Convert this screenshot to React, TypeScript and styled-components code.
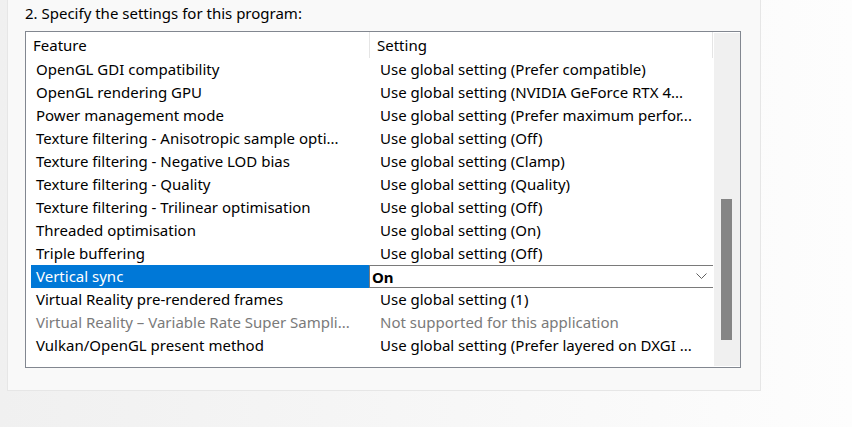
import styled, { createGlobalStyle } from 'styled-components';

const GlobalStyle = createGlobalStyle`
    html, body {
        margin: 0;
        padding: 0;
    }
    body {
        font-family: 'Noto Sans', 'Open Sans', sans-serif;
        font-size: 15px;
        color: #000;
    }
`;

const Page = styled.div`
    width: 852px;
    height: 427px;
    overflow: hidden;
    background: linear-gradient(to right, #f0f0f0, #fdfdfd);
`;

const Panel = styled.div`
    box-sizing: border-box;
    margin-left: 7px;
    width: 754px;
    height: 391px;
    background: #f9f9f9;
    border: 1px solid #e6e6e6;
    border-top: none;
    padding: 0 0 0 17px;
`;

const Title = styled.div`
    height: 31px;
    line-height: 27px;
    white-space: nowrap;
`;

const Table = styled.div`
    box-sizing: border-box;
    display: flex;
    width: 716px;
    height: 337px;
    border: 1px solid #828790;
    background: #fff;
`;

const List = styled.div`
    flex: 1;
    display: flex;
    flex-direction: column;
`;

const HeaderRow = styled.div`
    display: flex;
    height: 26px;
`;

const HeaderCell = styled.div<{ $width: number }>`
    box-sizing: border-box;
    width: ${(p) => p.$width}px;
    padding-left: 7px;
    line-height: 27px;
    border-right: 1px solid #e5e5e5;
`;

const Row = styled.div`
    display: flex;
    height: 23px;
    padding-left: 5px;
`;

const FeatureCell = styled.div<{ $selected?: boolean; $disabled?: boolean }>`
    box-sizing: border-box;
    width: 338px;
    padding-left: 5px;
    line-height: 23px;
    white-space: nowrap;
    overflow: hidden;
    background: ${(p) => (p.$selected ? '#0078d7' : 'transparent')};
    color: ${(p) => (p.$selected ? '#fff' : p.$disabled ? '#7a7a7a' : '#000')};
`;

const SettingCell = styled.div<{ $disabled?: boolean }>`
    box-sizing: border-box;
    width: 344px;
    padding-left: 11px;
    line-height: 23px;
    white-space: nowrap;
    overflow: hidden;
    color: ${(p) => (p.$disabled ? '#7a7a7a' : '#000')};
`;

const SelectBox = styled.div`
    box-sizing: border-box;
    width: 344px;
    height: 23px;
    display: flex;
    align-items: center;
    justify-content: space-between;
    padding: 0 6px 0 2px;
    border: 1px solid #7a7a7a;
    border-right: none;
    background: #fff;
    font-weight: 700;
`;

const Scrollbar = styled.div`
    width: 26px;
    margin: 1px 0;
    background: #f0f0f0;
    position: relative;
`;

const Thumb = styled.div`
    position: absolute;
    left: 7px;
    top: 166px;
    width: 11px;
    height: 141px;
    background: #858585;
`;

type Item = { feature: string; setting: string; disabled?: boolean; selected?: boolean };

const items: Item[] = [
    { feature: 'OpenGL GDI compatibility', setting: 'Use global setting (Prefer compatible)' },
    { feature: 'OpenGL rendering GPU', setting: 'Use global setting (NVIDIA GeForce RTX 4...' },
    { feature: 'Power management mode', setting: 'Use global setting (Prefer maximum perfor...' },
    { feature: 'Texture filtering - Anisotropic sample opti...', setting: 'Use global setting (Off)' },
    { feature: 'Texture filtering - Negative LOD bias', setting: 'Use global setting (Clamp)' },
    { feature: 'Texture filtering - Quality', setting: 'Use global setting (Quality)' },
    { feature: 'Texture filtering - Trilinear optimisation', setting: 'Use global setting (Off)' },
    { feature: 'Threaded optimisation', setting: 'Use global setting (On)' },
    { feature: 'Triple buffering', setting: 'Use global setting (Off)' },
    { feature: 'Vertical sync', setting: 'On', selected: true },
    { feature: 'Virtual Reality pre-rendered frames', setting: 'Use global setting (1)' },
    {
        feature: 'Virtual Reality \u2013 Variable Rate Super Sampli...',
        setting: 'Not supported for this application',
        disabled: true,
    },
    { feature: 'Vulkan/OpenGL present method', setting: 'Use global setting (Prefer layered on DXGI ...' },
];

const Chevron = () => (
    <svg width="11" height="7" viewBox="0 0 11 7">
        <polyline points="0.5,0.5 5.5,5.5 10.5,0.5" fill="none" stroke="#606060" strokeWidth="1" />
    </svg>
);

export default function App() {
    return (
        <Page>
            <GlobalStyle />
            <Panel>
                <Title>2. Specify the settings for this program:</Title>
                <Table>
                    <List>
                        <HeaderRow>
                            <HeaderCell $width={344}>Feature</HeaderCell>
                            <HeaderCell $width={343}>Setting</HeaderCell>
                        </HeaderRow>
                        {items.map((item) => (
                            <Row key={item.feature}>
                                <FeatureCell $selected={item.selected} $disabled={item.disabled}>
                                    {item.feature}
                                </FeatureCell>
                                {item.selected ? (
                                    <SelectBox>
                                        <span>{item.setting}</span>
                                        <Chevron />
                                    </SelectBox>
                                ) : (
                                    <SettingCell $disabled={item.disabled}>{item.setting}</SettingCell>
                                )}
                            </Row>
                        ))}
                    </List>
                    <Scrollbar>
                        <Thumb />
                    </Scrollbar>
                </Table>
            </Panel>
        </Page>
    );
}
